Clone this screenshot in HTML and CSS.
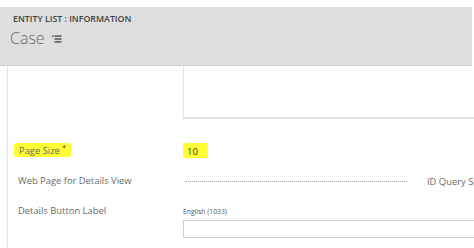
FILE: index.html
```html
<!DOCTYPE html>
<html>
<head>
<meta charset="utf-8">
<link rel="stylesheet" href="styles.css">
</head>
<body>
<div class="page">
  <header class="header">
    <div class="crumb">ENTITY LIST : INFORMATION</div>
    <div class="title">
      <span class="title-text">Case</span>
      <svg class="menu-icon" width="10" height="8" viewBox="0 0 10 8">
        <rect x="0" y="0.5" width="1.5" height="1.2" fill="#333"/>
        <rect x="2.5" y="0.5" width="7" height="1.2" fill="#333"/>
        <rect x="2.5" y="3.4" width="7" height="1.2" fill="#333"/>
        <rect x="2.5" y="6.3" width="7" height="1.2" fill="#333"/>
      </svg>
    </div>
  </header>
  <main class="form">
    <div class="textarea-row">
      <div class="textarea"></div>
    </div>
    <div class="row row-pagesize">
      <div class="label"><span class="hl hl-label">Page Size <sup class="req">*</sup></span></div>
      <div class="value"><span class="hl hl-value">10</span></div>
    </div>
    <div class="row row-web">
      <div class="label">Web Page for Details View</div>
      <div class="value lookup">
        <div class="dots"></div>
        <div class="side-label">ID Query String</div>
      </div>
    </div>
    <div class="row row-details">
      <div class="label">Details Button Label</div>
      <div class="value">
        <div class="lang">English (1033)</div>
        <div class="input"></div>
      </div>
    </div>
  </main>
</div>
</body>
</html>
```
FILE: styles.css
```css
* { box-sizing: border-box; }
html, body { margin: 0; padding: 0; background: #fff; overflow: hidden; }
body { font-family: "Open Sans", "Noto Sans", sans-serif; width: 474px; height: 248px; }
.page { padding-top: 7px; }
.header {
  width: 472px;
  height: 59px;
  background: #dedede;
  border-bottom: 1px solid #d2d2d2;
  padding: 6px 0 0 13px;
}
.crumb {
  font-size: 8.8px;
  font-weight: 600;
  color: #444;
  line-height: 12px;
}
.title {
  display: flex;
  align-items: center;
  margin-top: 3px;
  margin-left: -3px;
}
.title-text {
  font-size: 16px;
  font-weight: 300;
  color: #6a6a6a;
  line-height: 20px;
}
.menu-icon { margin-left: 7px; margin-top: 2px; }
.form {
  margin-left: 7px;
  border-left: 1px solid #e2e2e2;
  height: 182px;
}
.textarea-row { padding-left: 175px; }
.textarea {
  height: 53px;
  border-left: 1px solid #e4e4e4;
  border-bottom: 2px solid #e4e4e4;
}
.row { display: flex; align-items: flex-start; }
.label {
  flex: 0 0 175px;
  padding-left: 10px;
  font-size: 9.4px;
  color: #6b6b6b;
  line-height: 14px;
}
.value { flex: 1; min-width: 0; font-size: 9px; color: #333; }
.row-pagesize { margin-top: 24px; }
.hl { background: #ffff33; display: inline-block; }
.hl-label { margin-left: -4px; padding: 1px 5px 0 5px; color: #666; line-height: 13px; border-radius: 2px; }
.req { font-size: 7px; color: #333; vertical-align: 4px; line-height: 0; }
.hl-value { padding: 2px 10px 0 4px; line-height: 13px; color: #333; font-size: 9.5px; }
.row-web { margin-top: 16px; }
.lookup { display: flex; align-items: center; height: 14px; overflow: hidden; }
.dots {
  flex: 0 0 222px;
  margin-left: 2px;
  border-top: 1px dotted #a8a8a8;
}
.side-label {
  margin-left: 20px;
  font-size: 9.4px;
  color: #6b6b6b;
  white-space: nowrap;
}
.row-details { margin-top: 16px; }
.lang { font-size: 6.8px; color: #555; line-height: 9px; margin-top: 3px; }
.input {
  margin-top: 4px;
  height: 18px;
  border: 1px solid #cfcfcf;
  border-right: none;
}
```
